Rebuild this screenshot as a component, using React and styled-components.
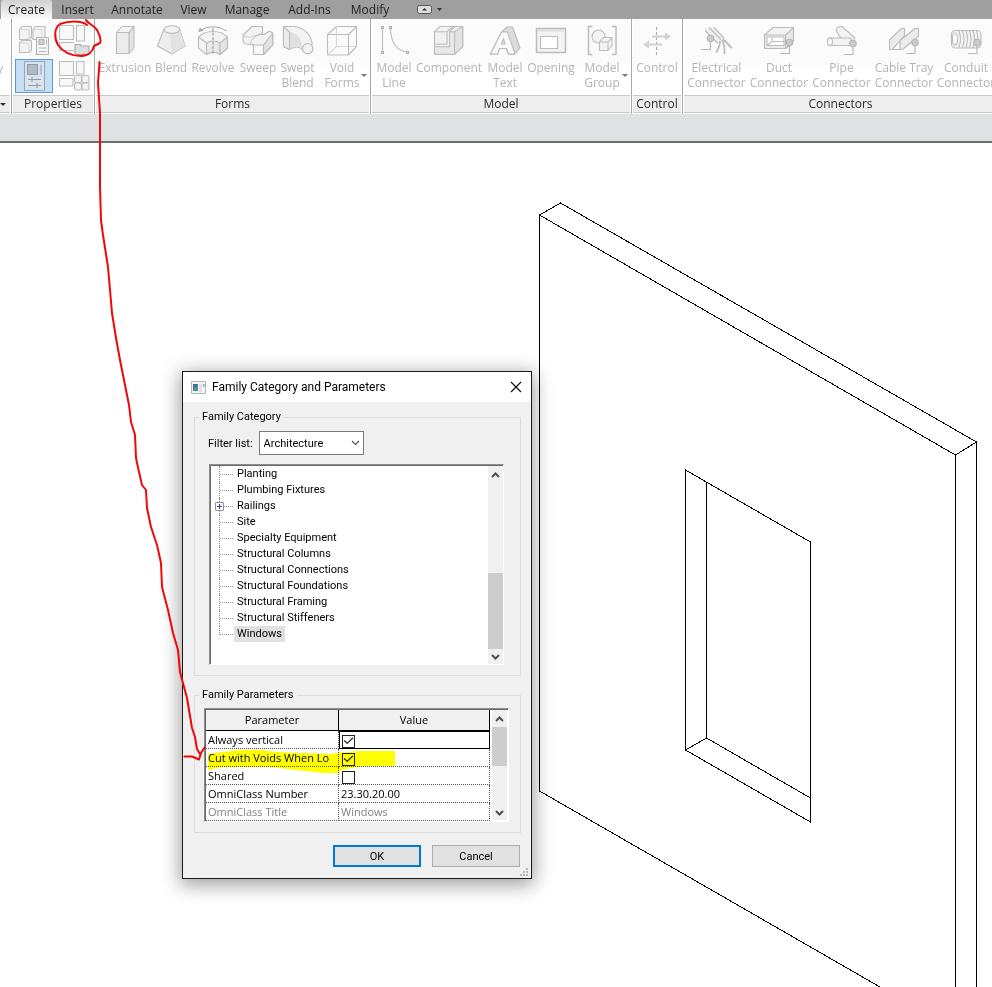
import React, { useState } from "react";
import styled, { createGlobalStyle, css } from "styled-components";

const GlobalStyle = createGlobalStyle`
  * {
    box-sizing: border-box;
  }

  body {
    margin: 0;
    background: #fff;
    color: #000;
    font-family: "Open Sans", "Noto Sans", sans-serif;
    font-size: 12px;
  }

  button, select, input {
    font: inherit;
    color: inherit;
    margin: 0;
  }
`;

const App = styled.div`
  position: relative;
  display: flex;
  flex-direction: column;
  min-height: 100vh;
  overflow: hidden;
`;

/* ---------- tabs ---------- */

const TabBar = styled.nav`
  display: flex;
  height: 19px;
  padding-left: 1px;
  background: #9f9f9f;
`;

const Tab = styled.button`
  flex: none;
  width: ${p => p.$width}px;
  height: 19px;
  padding: 0;
  border: 0;
  border-radius: 2px 2px 0 0;
  background: ${p =>
    p.$active ? "linear-gradient(#d2d2d2, #f8f8f8)" : "none"};
  color: #1e1e1e;
  line-height: 19px;
  text-align: center;
  white-space: nowrap;
`;

const TabToggle = styled.button`
  display: flex;
  align-items: center;
  margin-left: 18px;
  padding: 0;
  border: 0;
  background: none;
`;

/* ---------- ribbon ---------- */

const Ribbon = styled.div`
  display: flex;
  height: 95px;
  background: #fff;
  overflow: hidden;
`;

const Panel = styled.section`
  display: flex;
  flex: none;
  flex-direction: column;
  border-right: 1px solid #a8a8a8;
  padding: 0 1px;
`;

const PanelBody = styled.div`
  display: flex;
  height: 76px;
  padding-left: ${p => p.$pad || 0}px;
  background: linear-gradient(#fbfbfb 60%, #fff 62%);
`;

const PanelTitle = styled.div`
  height: 18px;
  border-top: 1px solid #c8c9cb;
  border-bottom: 1px solid #c8c9cb;
  background: #eee;
  color: #2b2b2b;
  line-height: 16px;
  text-align: center;
`;

const Tool = styled.button`
  position: relative;
  display: flex;
  flex: none;
  flex-direction: column;
  align-items: center;
  width: ${p => p.$width}px;
  padding: 5px 0 0;
  border: 0;
  background: none;
  color: #b3b3b3;
  line-height: 15px;
  text-align: center;
  white-space: pre;

  svg {
    flex: none;
    margin-bottom: 4px;
  }
`;

const ToolCaret = styled.span`
  position: absolute;
  right: 2px;
  bottom: 18px;
  border: 3px solid transparent;
  border-top-color: #777;
  border-bottom: 0;
`;

const CutPanel = styled(Panel)`
  width: 12px;
  color: #b3b3b3;
  padding-left: 0;
`;

const CutBody = styled(PanelBody)`
  align-items: center;
  justify-content: flex-end;
  padding: 22px 7px 0 0;
`;

const CutTitle = styled(PanelTitle)`
  display: flex;
  align-items: center;
  justify-content: flex-start;
`;

const CaretDown = styled.span`
  border: 3px solid transparent;
  border-top-color: #333;
  border-bottom: 0;
`;

const SmallTools = styled.div`
  display: grid;
  grid-template-columns: 38px 38px;
  grid-auto-rows: 34px;
  gap: 2px;
  padding: 4px 0 0 2px;
`;

const SmallTool = styled.button`
  display: flex;
  align-items: center;
  justify-content: center;
  padding: 0;
  border: 1px solid ${p => (p.$active ? "#5b9bd8" : "transparent")};
  background: ${p => (p.$active ? "#c7dff5" : "none")};
`;

const OptionsBar = styled.div`
  height: 29px;
  border-bottom: 2px solid #6e6e6e;
  background: #e0e1e3;
`;

/* ---------- workspace ---------- */

const Workspace = styled.main`
  position: relative;
  flex: 1;
  overflow: hidden;
`;

const Model = styled.svg`
  position: absolute;
  top: 0;
  left: 0;
  width: 100%;
  height: 100%;
  fill: none;
  stroke: #000;
`;

const Dialog = styled.div`
  position: absolute;
  top: 228px;
  left: 182px;
  width: 350px;
  border: 1px solid #1a1a1a;
  background: #f0f0f0;
  box-shadow: 0 4px 18px 2px rgba(0, 0, 0, 0.38);
  font-family: Roboto, "Open Sans", sans-serif;
`;

const TitleBar = styled.header`
  display: flex;
  align-items: center;
  height: 30px;
  padding: 0 9px 0 8px;
  background: #fff;

  h1 {
    flex: 1;
    margin: 0 0 0 6px;
    font-size: 12px;
    font-weight: 400;
    line-height: 16px;
  }
`;

const CloseButton = styled.button`
  display: flex;
  padding: 0;
  border: 0;
  background: none;
`;

const DialogBody = styled.form`
  padding: 6px 10px 0 11px;
`;

const Group = styled.fieldset`
  min-width: 0;
  margin: 0 0 10px;
  padding: ${p => p.$pad};
  border: 1px solid #dcdcdc;

  legend {
    margin-left: ${p => p.$legend || 0}px;
    padding: 0 3px;
    font-size: 11px;
    line-height: 18px;
  }
`;

const FilterRow = styled.div`
  display: flex;
  align-items: center;
  gap: 6px;
  margin-bottom: 9px;
  font-size: 11px;
`;

const SelectBox = styled.div`
  display: grid;
  align-items: center;
  width: 105px;

  select,
  svg {
    grid-area: 1 / 1;
  }

  select {
    appearance: none;
    width: 100%;
    height: 24px;
    padding: 0 4px;
    border: 1px solid #7a7a7a;
    border-radius: 0;
    background: #fff;
  }

  svg {
    justify-self: end;
    margin-right: 4px;
    pointer-events: none;
  }
`;

const Sunken = styled.div`
  display: flex;
  border: 1px solid;
  border-color: #8c8c8c #fff #fff #8c8c8c;
  box-shadow: inset 1px 1px 0 #696969;
  background: #fff;
`;

const TreeBox = styled(Sunken)`
  height: 201px;
  margin: 0 5px 0 1px;
  padding: 1px 0 0 1px;
`;

const Tree = styled.ul`
  flex: 1;
  margin: 0;
  padding: 0;
  list-style: none;
  font-size: 11px;
`;

const TreeItem = styled.li`
  position: relative;
  display: flex;
  height: 16px;
  line-height: 16px;
`;

const Branch = styled.span`
  width: 15px;
  height: ${p => (p.$last ? 9 : 16)}px;
  margin-left: 8px;
  border-left: 1px dotted #8f8f8f;
  background: repeating-linear-gradient(90deg, #9a9a9a 0 1px, #fff 1px 2px) 0
    8px / 100% 1px no-repeat;
`;

const Expander = styled.button`
  position: absolute;
  top: 4px;
  left: 4px;
  display: flex;
  width: 9px;
  height: 9px;
  padding: 0;
  border: 1px solid #919191;
  border-radius: 1px;
  background: #fff;
`;

const TreeLabel = styled.span`
  padding: 0 3px;
  ${p =>
    p.$selected &&
    css`
      background: #e0e0e0;
    `}
`;

const ScrollBar = styled.div`
  display: flex;
  flex: none;
  flex-direction: column;
  width: ${p => p.$width}px;
  background: #f0f0f0;

  button {
    display: flex;
    align-items: center;
    justify-content: center;
    height: 17px;
    padding: 0;
    border: 0;
    background: none;
  }

  button:last-child {
    height: 15px;
  }
`;

const Track = styled.div`
  display: flex;
  flex: 1;
  flex-direction: column;
  justify-content: ${p => (p.$end ? "flex-end" : "flex-start")};
`;

const Thumb = styled.div`
  height: ${p => p.$height}px;
  background: #cdcdcd;
`;

const GridBox = styled(Sunken)`
  height: 114px;
  padding: 1px 1px 1px 1px;
`;

const ParamTable = styled.table`
  flex: 1;
  width: 100%;
  min-width: 0;
  table-layout: fixed;
  border-collapse: separate;
  border-spacing: 0;
  margin-right: 2px;
  font-family: "Open Sans", "Noto Sans", sans-serif;
  font-size: 11px;
  line-height: 16px;

  th {
    height: 21px;
    padding: 0;
    border-right: 1px solid #000;
    border-bottom: 1px solid #000;
    background: #f0f0f0;
    font-weight: 400;
  }

  td {
    height: 18px;
    padding: 0 2px;
    border-right: 1px dotted #555;
    border-bottom: 1px dotted #555;
    overflow: hidden;
    white-space: nowrap;
  }
`;

const Row = styled.tr`
  color: ${p => (p.$disabled ? "#808080" : "#000")};
`;

const ValueCell = styled.td`
  ${p =>
    p.$focused &&
    css`
      outline: 1px solid #000;
      outline-offset: -1px;
    `}
`;

const Check = styled.input`
  appearance: none;
  display: block;
  width: 13px;
  height: 13px;
  margin: 3px 0 0 1px;
  border: 1px solid #222;
  background: #fff;

  &:checked::before {
    content: "";
    display: block;
    width: 11px;
    height: 11px;
    background: #333;
    clip-path: polygon(6% 50%, 15% 42%, 38% 64%, 86% 15%, 95% 24%, 38% 80%);
  }
`;

const Actions = styled.footer`
  display: flex;
  justify-content: flex-end;
  gap: 11px;
  padding: 2px 1px 0 0;
`;

const PushButton = styled.button`
  width: 88px;
  height: 22px;
  padding: 0;
  border: ${p => (p.$primary ? "2px solid #0078d7" : "1px solid #adadad")};
  background: #e1e1e1;
  font-size: 11px;
`;

const Grip = styled.div`
  display: flex;
  justify-content: flex-end;
  height: 11px;
  padding: 1px 2px 0 0;
`;

const Marks = styled.svg`
  position: absolute;
  top: 0;
  left: 0;
  width: 100%;
  height: 100%;
  fill: none;
  stroke: #f00808;
  stroke-width: 2;
  stroke-linecap: round;
  stroke-linejoin: round;
  pointer-events: none;
`;

const Highlight = styled(Marks)`
  fill: #ff0;
  stroke: none;
  mix-blend-mode: multiply;
`;

/* ---------- icons ---------- */

const Icon = ({ children }) => (
  <svg
    width="32"
    height="32"
    viewBox="0 0 32 32"
    fill="#f3f3f3"
    stroke="#bcbcbc"
    strokeWidth="1.1"
    strokeLinejoin="round"
  >
    {children}
  </svg>
);

const Plug = ({ x, y, d }) => (
  <g>
    <path d={d} fill="none" stroke="#b6b6b6" />
    <circle cx={x} cy={y} r="3.2" fill="#cbcbcb" stroke="#b6b6b6" />
  </g>
);

const ICONS = {
  extrusion: (
    <Icon>
      <path d="M7.500 8.500L13 2.500H25L20 8.500Z" />
      <path d="M20 8.500L25 2.500V24L20 29.500Z" fill="#e3e3e3" />
      <path d="M7.500 8.500H20V29.500H7.500Z" fill="#ececec" />
    </Icon>
  ),
  blend: (
    <Icon>
      <path d="M9 5L2.500 22L17 30L30 22L24.500 5Z" fill="#ededed" />
      <path d="M15 9L17 30L30 22L24.500 5Z" fill="#e2e2e2" stroke="none" />
      <ellipse cx="16.800" cy="5.500" rx="7.800" ry="3.800" />
    </Icon>
  ),
  revolve: (
    <Icon>
      <path d="M1.500 13L7 9Q16 6 25 9L30.500 13V24L23 30.500Q16 26 9.500 30.500L1.500 24Z" />
      <path d="M9.500 19Q16 15 23 19V30.500Q16 26 9.500 30.500Z" fill="#e8e8e8" />
      <path d="M23 19L30.500 13V24L23 30.500Z" fill="#e4e4e4" />
      <path d="M1.500 13L9.500 19V30.500" fill="none" />
      <path d="M16 4V31" strokeDasharray="3 1.500" stroke="#999" />
      <path d="M4 6Q16 -1 29.500 7" fill="none" stroke="#aaa" />
      <path d="M1 8L3 3.500L6.500 7Z" fill="#aaa" stroke="none" />
    </Icon>
  ),
  sweep: (
    <Icon>
      <path d="M1 11L10 2.500H20.500V9L18 10.500H22L27.500 7L30.700 9V21L21.500 30.500H11.500V21L4 20Q1 19 1 16Z" />
      <path d="M1 11Q4 14 9 13L20.500 9M11.500 21L8 18.500Q11 13 18 10.500" fill="none" stroke="#cfcfcf" />
      <path d="M21.500 21L30.700 9V21L21.500 30.500Z" fill="#e2e2e2" />
      <path d="M11.500 21H21.500V30.500H11.500Z" fill="#f8f8f8" />
    </Icon>
  ),
  sweptBlend: (
    <Icon>
      <path d="M1.500 2.500H12Q28 5 30.300 20L21 26Q15 20 7.500 25.500L1.500 22.500Z" />
      <path d="M7.500 8Q19 9 21 26Q15 20 7.500 25.500Z" fill="#e0e0e0" stroke="none" />
      <path d="M1.500 2.500L7.500 8V25.500L1.500 22.500Z" fill="#ececec" />
      <circle cx="25.700" cy="24.700" r="5.200" />
    </Icon>
  ),
  voidForms: (
    <Icon>
      <path d="M1.500 10.500L10.500 2.500H30.500V22.500L22.500 31H1.500Z" fill="#fafafa" />
      <path d="M1.500 31L10.500 22.500H30.500M10.500 2.500V22.500" fill="none" stroke="#d8d8d8" />
      <path d="M1.500 10.500H22.500V31M22.500 10.500L30.500 2.500" fill="none" />
    </Icon>
  ),
  modelLine: (
    <Icon>
      <path d="M4.500 4V28M12.500 4Q13 26 29 28" fill="none" />
      <path d="M3.500 2.500h2v2h-2zM3.500 27.500h2v2h-2zM11.500 2.500h2v2h-2zM28.500 27.500h2v2h-2z" fill="#fff" stroke="#aaa" />
    </Icon>
  ),
  component: (
    <Icon>
      <path d="M1.500 7.700L7 2.500H29.700V22.700L21.500 30.300H1.500Z" />
      <path d="M21.500 7.700L29.700 2.500V22.700L21.500 30.300Z" fill="#e2e2e2" />
      <path d="M1.500 22.700H16.500V7.700H21.500V30.300H1.500Z" fill="#e8e8e8" />
      <path d="M1.500 7.700H14V20.300H1.500Z" fill="#f1f1f1" />
      <path d="M14 7.700L19.700 2.500M16.500 7.700L22 2.500" fill="none" />
    </Icon>
  ),
  modelText: (
    <Icon>
      <path d="M1.500 30L12.500 8L18 3H23.500L31 24L26 30H19.500L17 24.500H10.500L8.500 30Z" fill="#dcdcdc" />
      <path d="M1.500 30L12.500 8H18.500L26 30H19.500L17.500 24.500H10.500L8.500 30ZM12.500 20H16L14.500 14.500Z" fill="#fafafa" fillRule="evenodd" />
    </Icon>
  ),
  opening: (
    <Icon>
      <path d="M1.500 4.500H30.500V28.500H1.500Z" strokeWidth="1.5" />
      <path d="M2 5H30V7.500H2Z" fill="#e0e0e0" stroke="none" />
      <path d="M5.500 12.500H22.500V24.500H5.500Z" fill="#fff" />
    </Icon>
  ),
  modelGroup: (
    <Icon>
      <path d="M6.500 2.500H2.500V30.500H6.500M26 2.500H30V30.500H26" fill="none" strokeWidth="1.500" />
      <circle cx="12.500" cy="12.500" r="6.500" />
      <path d="M13.500 18L17.500 13.500H26V22L22 26.500H13.500Z" />
      <path d="M13.500 18H22V26.500M22 18L26 13.500" fill="none" />
    </Icon>
  ),
  control: (
    <Icon>
      <path d="M15.500 3V31" strokeDasharray="3 2" stroke="#aaa" />
      <path d="M11 12.500H25M21 20.500H8" stroke="#d2d2d2" strokeWidth="2" />
      <path d="M24 8.500L30 12.500L24 16.500ZM8 16.500L2 20.500L8 24.500Z" fill="#d2d2d2" stroke="none" />
    </Icon>
  ),
  electrical: (
    <Icon>
      <path d="M4 3.500H13L23 14L17 19.500L4 6.500Z" fill="#efefef" stroke="none" />
      <path d="M4 6.500L17 19.500M8 3.500L20 15.500M13 3.500L23 14" fill="none" />
      <path d="M19 17Q19 23 15 28.500M21 16Q24 21 23.500 30M22 15L30.700 24" fill="none" strokeWidth="1.800" />
      <Plug x={9.5} y={14.5} d="M9.500 14.500V25.500H0" />
    </Icon>
  ),
  duct: (
    <Icon>
      <path d="M1.500 11L10 3.500H30.500V17L22.500 24.500H1.500Z" />
      <path d="M22.500 11L30.500 3.500V17L22.500 24.500Z" fill="#e6e6e6" />
      <path d="M1.500 11H22.500V24.500H1.500Z" fill="#ececec" />
      <path d="M4 13H21V21.500H4Z" fill="#fff" />
      <path d="M4 21.500L9 17.500H21M9 17.500V13" fill="none" />
      <Plug x={26.500} y={18.500} d="M26.500 18.500V29.500H17" />
    </Icon>
  ),
  pipe: (
    <Icon>
      <path d="M10 6Q11 2 16 2.500L29 14L24 20L14 13Z" />
      <path d="M4 14H25V21.500H4Q1.500 21 1.500 17.700Q1.500 14 4 14Z" />
      <ellipse cx="4" cy="17.800" rx="2.500" ry="3.700" fill="#fff" />
      <Plug x={27} y={19.500} d="M27 19.500V30.500H18" />
    </Icon>
  ),
  cableTray: (
    <Icon>
      <path d="M1.500 16L13.500 4.500H16.500V13L4.500 25.500H1.500Z" fill="#ebebeb" />
      <path d="M4.500 25.500L16.500 11.500H22L12 25.500Z" fill="#f8f8f8" />
      <path d="M12 16.500L27 4.500H30.500V12L14.500 25.500H12Z" fill="#ebebeb" />
      <Plug x={27} y={18.500} d="M27 18.500V29.500H18" />
    </Icon>
  ),
  conduit: (
    <Icon>
      <rect x="1.500" y="6.500" width="29.500" height="17.500" rx="4" />
      <ellipse cx="5" cy="15" rx="2.500" ry="6" fill="#fff" />
      <path d="M9 7Q12 15 9 23.500M12.500 7Q15.500 15 12.500 23.500M16 7Q19 15 16 23.500M19.500 7Q22.500 15 19.500 23.500M23 7Q26 15 23 23.500M26.500 7Q29.500 15 26.500 23.500" fill="none" />
      <Plug x={27} y={18.500} d="M27 18.500V29.500H18" />
    </Icon>
  ),
  familyTypes: (
    <Icon>
      <path d="M1.500 5.500L4 2.500H13.500V13L11 15.500H1.500ZM15 5.500L17.500 2.500H27V13L24 15.500H15ZM1.500 19L4 16.500H13.500V26L11 28.500H1.500Z" />
      <path d="M1.500 5.500H11V15.500M15 5.500H24V12M1.500 19H11V28.500" fill="none" stroke="#d8d8d8" />
      <path d="M18.500 13.500H30.500V30.500H18.500Z" fill="#f6f6f6" stroke="#b4b4b4" />
      <path d="M21 15.500H26V20.500H21ZM28.500 15.500V20.500M21 24H28.500M21 27.500H28.500" fill="#d0d0d0" stroke="#b4b4b4" />
    </Icon>
  ),
  category: (
    <Icon>
      <path d="M1.500 1.500H15.500V15.500H1.500ZM18.500 1.500H26.500V17H18.500ZM16.500 18.500H1.500V26.500H16.500" fill="#f8f8f8" />
      <path d="M17 20.500H22L23.500 22H31V30.500H17Z" fill="#dedede" stroke="#a9a9a9" />
    </Icon>
  ),
  properties: (
    <Icon>
      <path d="M6.500 1.500H26.500V30.500H6.500Z" fill="#d9e4ee" stroke="#98a8b8" />
      <path d="M9.500 4.500H19.500V14.500H9.500Z" fill="#aebac5" stroke="#8f9eac" />
      <path d="M23 4.500V14.500" stroke="#b4c0cb" strokeWidth="2" />
      <path d="M10 19.500H23M10 25.500H23M14 17V22M19 23V28" stroke="#8f9eac" />
    </Icon>
  ),
  types: (
    <Icon>
      <path d="M1.500 1.500H15.500V15.500H1.500ZM18.500 1.500H26V14H18.500ZM1.500 18.500H15V26H1.500Z" fill="#f8f8f8" />
      <rect x="16.500" y="15.500" width="7" height="7" rx="1.500" />
      <rect x="24" y="15.500" width="7" height="7" rx="1.500" />
      <rect x="16.500" y="23" width="7" height="7" rx="1.500" />
      <rect x="24" y="23" width="7" height="7" rx="1.500" />
    </Icon>
  )
};

const Chevron = ({ up, bold }) => (
  <svg width="9" height="6" viewBox="0 0 9 6" fill="none">
    <path
      d={up ? "M1 5L4.500 1.500L8 5" : "M1 1L4.500 4.500L8 1"}
      stroke="#505050"
      strokeWidth={bold ? 2 : 1.1}
    />
  </svg>
);

/* ---------- data ---------- */

const TABS = [
  ["Create", 51],
  ["Insert", 51],
  ["Annotate", 68],
  ["View", 45],
  ["Manage", 62],
  ["Add-Ins", 63],
  ["Modify", 58]
];

const PANELS = [
  {
    title: "Forms",
    pad: 2,
    tools: [
      ["extrusion", "Extrusion", 54],
      ["blend", "Blend", 38],
      ["revolve", "Revolve", 46],
      ["sweep", "Sweep", 44],
      ["sweptBlend", "Swept\nBlend", 35],
      ["voidForms", "Void\nForms", 54, true]
    ]
  },
  {
    title: "Model",
    tools: [
      ["modelLine", "Model\nLine", 44],
      ["component", "Component", 66],
      ["modelText", "Model\nText", 46],
      ["opening", "Opening", 46],
      ["modelGroup", "Model\nGroup", 56, true]
    ]
  },
  { title: "Control", tools: [["control", "Control", 48]] },
  {
    title: "Connectors",
    pad: 1,
    tools: [
      ["electrical", "Electrical\nConnector", 63],
      ["duct", "Duct\nConnector", 62],
      ["pipe", "Pipe\nConnector", 63],
      ["cableTray", "Cable Tray\nConnector", 62],
      ["conduit", "Conduit\nConnector", 62]
    ]
  }
];

const CATEGORIES = [
  "Planting",
  "Plumbing Fixtures",
  "Railings",
  "Site",
  "Specialty Equipment",
  "Structural Columns",
  "Structural Connections",
  "Structural Foundations",
  "Structural Framing",
  "Structural Stiffeners",
  "Windows"
];

/* ---------- parts ---------- */

const Scroller = ({ width, thumb, end }) => (
  <ScrollBar $width={width}>
    <button type="button" aria-label="Scroll up">
      <Chevron up bold />
    </button>
    <Track $end={end}>
      <Thumb $height={thumb} />
    </Track>
    <button type="button" aria-label="Scroll down">
      <Chevron bold />
    </button>
  </ScrollBar>
);

const SmallToolsPanel = () => (
  <PanelBody>
    <SmallTools>
      <SmallTool aria-label="Family Types">{ICONS.familyTypes}</SmallTool>
      <SmallTool aria-label="Family Category and Parameters">
        {ICONS.category}
      </SmallTool>
      <SmallTool $active aria-label="Properties">
        {ICONS.properties}
      </SmallTool>
      <SmallTool aria-label="Type Properties">{ICONS.types}</SmallTool>
    </SmallTools>
  </PanelBody>
);

const RibbonPanels = () => (
  <Ribbon>
    <CutPanel>
      <CutBody>y</CutBody>
      <CutTitle>
        <CaretDown />
      </CutTitle>
    </CutPanel>
    <Panel>
      <SmallToolsPanel />
      <PanelTitle>Properties</PanelTitle>
    </Panel>
    {PANELS.map(panel => (
      <Panel key={panel.title}>
        <PanelBody $pad={panel.pad}>
          {panel.tools.map(([icon, label, width, menu]) => (
            <Tool key={icon} $width={width}>
              {ICONS[icon]}
              {label}
              {menu && <ToolCaret />}
            </Tool>
          ))}
        </PanelBody>
        <PanelTitle>{panel.title}</PanelTitle>
      </Panel>
    ))}
  </Ribbon>
);

const CategoryTree = () => {
  const [selected, setSelected] = useState("Windows");
  return (
    <TreeBox>
      <Tree role="tree" aria-label="Family Category">
        {CATEGORIES.map((name, i) => (
          <TreeItem
            key={name}
            role="treeitem"
            aria-selected={name === selected}
            onClick={() => setSelected(name)}
          >
            <Branch $last={i === CATEGORIES.length - 1} />
            {name === "Railings" && (
              <Expander type="button" aria-label="Expand Railings">
                <svg width="7" height="7" viewBox="0 0 7 7" stroke="#2b4a9a">
                  <path d="M1 3.500H6M3.500 1V6" />
                </svg>
              </Expander>
            )}
            <TreeLabel $selected={name === selected}>{name}</TreeLabel>
          </TreeItem>
        ))}
      </Tree>
      <Scroller width={15} thumb={76} end />
    </TreeBox>
  );
};

const Parameters = () => (
  <GridBox>
    <ParamTable>
      <colgroup>
        <col width="133" />
        <col />
      </colgroup>
      <thead>
        <tr>
          <th>Parameter</th>
          <th>Value</th>
        </tr>
      </thead>
      <tbody>
        <Row>
          <td>
            <label htmlFor="vertical">Always vertical</label>
          </td>
          <ValueCell $focused>
            <Check id="vertical" type="checkbox" defaultChecked />
          </ValueCell>
        </Row>
        <Row>
          <td>
            <label htmlFor="voids">Cut with Voids When Lo</label>
          </td>
          <ValueCell>
            <Check id="voids" type="checkbox" defaultChecked />
          </ValueCell>
        </Row>
        <Row>
          <td>
            <label htmlFor="shared">Shared</label>
          </td>
          <ValueCell>
            <Check id="shared" type="checkbox" />
          </ValueCell>
        </Row>
        <Row>
          <td>OmniClass Number</td>
          <ValueCell>23.30.20.00</ValueCell>
        </Row>
        <Row $disabled>
          <td>OmniClass Title</td>
          <ValueCell>Windows</ValueCell>
        </Row>
      </tbody>
    </ParamTable>
    <Scroller width={15} thumb={39} />
  </GridBox>
);

const FamilyDialog = () => (
  <Dialog role="dialog" aria-labelledby="dialog-title">
    <TitleBar>
      <svg width="15" height="13" viewBox="0 0 15 13">
        <path d="M.5.5H14.500V12.500H.5Z" fill="#f2f4f6" stroke="#b3b7bb" />
        <path d="M2 3H7V10H2Z" fill="#3f6f9a" />
        <path d="M2 8L7 4V10H2Z" fill="#4c9484" />
        <path d="M8 3H11V11H8Z" fill="#dfe3e6" />
        <path d="M12 3H13.500V6H12Z" fill="#8fb9a8" />
      </svg>
      <h1 id="dialog-title">Family Category and Parameters</h1>
      <CloseButton aria-label="Close">
        <svg width="12" height="12" viewBox="0 0 12 12" stroke="#111">
          <path d="M1 1L11 11M11 1L1 11" strokeWidth="1.200" />
        </svg>
      </CloseButton>
    </TitleBar>
    <DialogBody onSubmit={e => e.preventDefault()}>
      <Group $pad="5px 11px 10px 13px" $legend={-9}>
        <legend>Family Category</legend>
        <FilterRow>
          <label htmlFor="filter">Filter list:</label>
          <SelectBox>
            <select id="filter" defaultValue="Architecture">
              <option>Architecture</option>
            </select>
            <Chevron />
          </SelectBox>
        </FilterRow>
        <CategoryTree />
      </Group>
      <Group $pad="4px 11px 10px 9px" $legend={-5}>
        <legend>Family Parameters</legend>
        <Parameters />
      </Group>
      <Actions>
        <PushButton type="submit" $primary>
          OK
        </PushButton>
        <PushButton type="button">Cancel</PushButton>
      </Actions>
    </DialogBody>
    <Grip>
      <svg width="9" height="9" viewBox="0 0 9 9" fill="#b8b8b8">
        <path d="M6 0h2v2h-2zM3 3h2v2h-2zM6 3h2v2h-2zM0 6h2v2h-2zM3 6h2v2h-2zM6 6h2v2h-2z" />
      </svg>
    </Grip>
  </Dialog>
);

/* wall with a window opening, seen in isometric */
const WallModel = () => (
  <Model shapeRendering="crispEdges">
    <path d="M539.500 648V72L560.500 60L976.500 299V900M539.500 72L955.500 312L976.500 299M955.500 312V900M539.500 648L880 844" />
    <path d="M685.500 327V607L810.500 679V399ZM706.500 339V595L810.500 655M685.500 607L706.500 595" />
  </Model>
);

const Annotations = () => (
  <>
    <Highlight>
      <path d="M208 754L222 752L240 750L262 750L276 752L300 753L330 754L345 752L360 751L395 751V766L364 766L352 768L341 770L338 773L324 773L305 771L296 770L270 767L222 767L208 770Z" />
    </Highlight>
    <Marks>
      <path d="M87 25C81 20 68 21 60 24C54 28 54 38 58 45C63 52 71 56 81 56C89 56 93 51 94 46L100 43C102 39 99 34 97 30C94 25 88 24 86 20" />
      <path d="M99.500 62L98 83L100 113V187L101 220L103 235L108 267L112 313L116 338L120 360L124 380L129 405L131 422L135 435L136 458L139 472L142 485L146 490L147 508L151 527L157 545L161 563L162 587L168 610L173 633L178 650L180 672L187 698L192 728L195 737L197 749L200 754" />
      <path d="M184.500 756.500H192L199 759.500L201 753L205 747" />
    </Marks>
  </>
);

export default function RibbonApp() {
  return (
    <App>
      <GlobalStyle />
      <TabBar>
        {TABS.map(([name, width], i) => (
          <Tab key={name} $width={width} $active={i === 0}>
            {name}
          </Tab>
        ))}
        <TabToggle aria-label="Minimize ribbon">
          <svg width="26" height="9" viewBox="0 0 26 9">
            <rect x=".5" y=".5" width="14" height="8" rx="2" fill="#ddd" stroke="#555" />
            <path d="M5 5.500L7.500 3L10 5.500ZM20 3H25L22.500 6Z" fill="#333" />
          </svg>
        </TabToggle>
      </TabBar>
      <RibbonPanels />
      <OptionsBar />
      <Workspace>
        <WallModel />
        <FamilyDialog />
      </Workspace>
      <Annotations />
    </App>
  );
}
